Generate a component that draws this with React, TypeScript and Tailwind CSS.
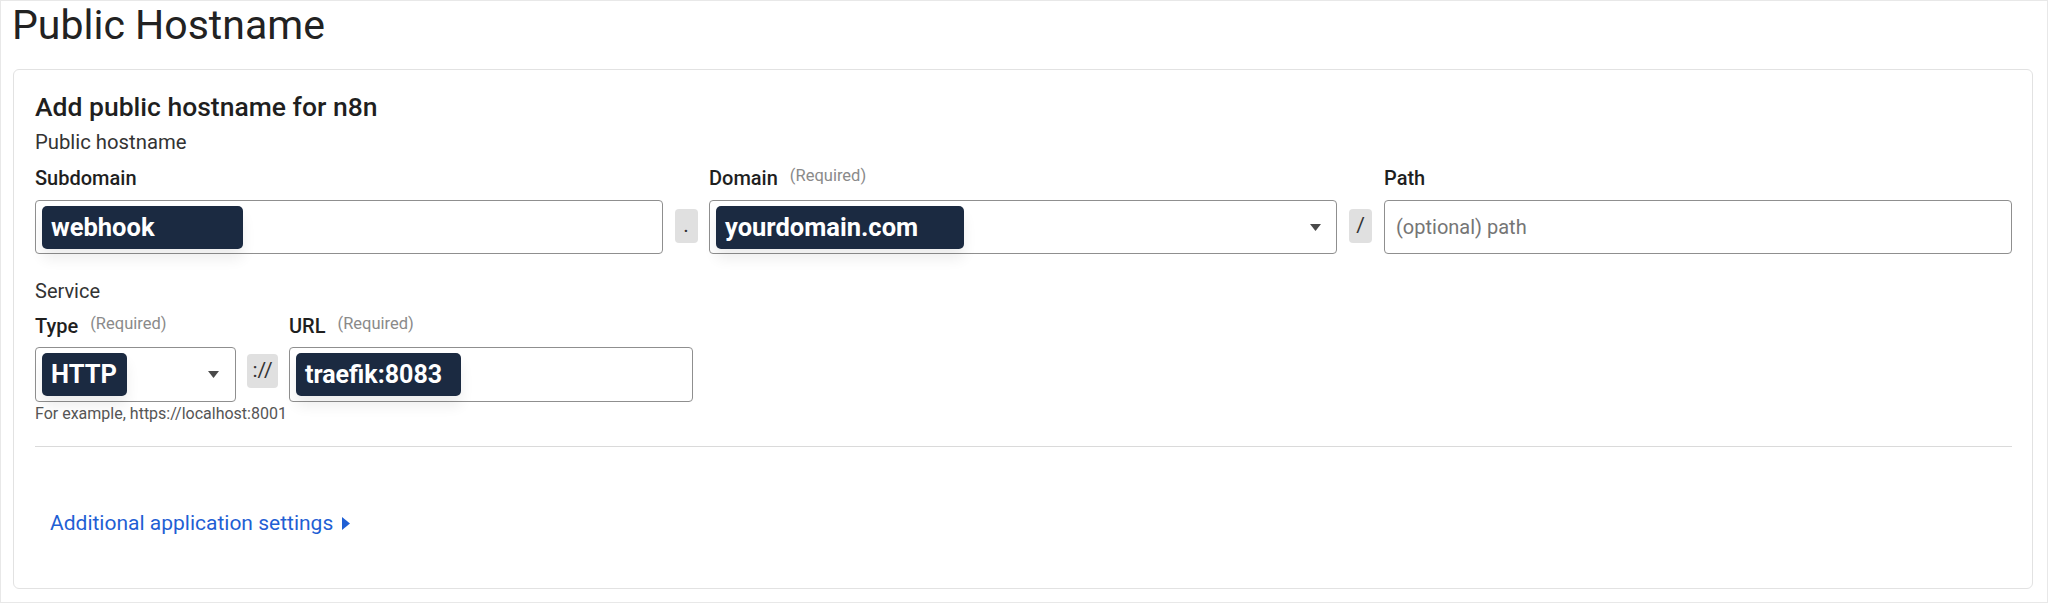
import React from "react";

function Caret() {
  return (
    <svg width="11" height="7" viewBox="0 0 11 7" className="shrink-0">
      <path d="M0 0 L11 0 L5.5 7 Z" fill="#4a4a4a" />
    </svg>
  );
}

function Redact({ children, w }: { children: React.ReactNode; w: string }) {
  return (
    <div
      className={`${w} h-[43px] bg-[#1b2a41] rounded-[5px] flex items-center px-[9px] text-white text-[25.5px] font-bold shadow-[0_10px_14px_rgba(0,0,0,0.07)]`}
    >
      {children}
    </div>
  );
}

function Chip({ children, w }: { children: React.ReactNode; w: string }) {
  return (
    <div
      className={`${w} h-[34px] shrink-0 bg-[#e0e0e0] rounded-[4px] flex items-center justify-center text-[21px] text-[#333]`}
    >
      {children}
    </div>
  );
}

function Label({ text, required }: { text: string; required?: boolean }) {
  return (
    <div className="flex items-center h-[24px]">
      <span className="text-[20px] font-medium text-[#1f1f1f] leading-[24px]">{text}</span>
      {required && (
        <span className="ml-[12px] text-[16.5px] text-[#8a8a8a] leading-[20px] -mt-[4px]">(Required)</span>
      )}
    </div>
  );
}

export default function App() {
  return (
    <div className="w-[2048px] h-[603px] bg-white border border-[#e8e8e8] font-['Roboto',sans-serif] text-[#222] overflow-hidden">
      <h1 className="text-[41px] leading-[48px] pl-[11px] text-[#222]">Public Hostname</h1>
      <div className="mt-[20px] ml-[12px] mr-[14px] border border-[#e2e2e2] rounded-[6px] pl-[21px] pr-[20px] pt-[22px] pb-[52px]">
        <div className="text-[26.5px] font-medium leading-[30px] text-[#1f1f1f]">Add public hostname for n8n</div>
        <div className="mt-[8px] text-[20.3px] leading-[24px] text-[#333]">Public hostname</div>

        <div className="mt-[12px] flex items-start">
          <div className="flex-1 flex flex-col">
            <Label text="Subdomain" />
            <div className="mt-[10px] h-[54px] border border-[#8f8f8f] rounded-[4px] flex items-center px-[6px]">
              <Redact w="w-[201px]">webhook</Redact>
            </div>
          </div>
          <div className="w-[46px] shrink-0 flex justify-center pt-[43px]">
            <Chip w="w-[23px]">.</Chip>
          </div>
          <div className="flex-1 flex flex-col">
            <Label text="Domain" required />
            <div className="mt-[10px] h-[54px] border border-[#8f8f8f] rounded-[4px] flex items-center justify-between pl-[6px] pr-[15px]">
              <Redact w="w-[248px]">yourdomain.com</Redact>
              <Caret />
            </div>
          </div>
          <div className="w-[47px] shrink-0 flex justify-center pt-[43px]">
            <Chip w="w-[23px]">/</Chip>
          </div>
          <div className="flex-1 flex flex-col">
            <Label text="Path" />
            <div className="mt-[10px] h-[54px] border border-[#8f8f8f] rounded-[4px] flex items-center px-[11px] text-[20px] text-[#757575]">
              (optional) path
            </div>
          </div>
        </div>

        <div className="mt-[25px] text-[20px] leading-[24px] text-[#333]">Service</div>

        <div className="mt-[11px] flex items-start">
          <div className="w-[201px] flex flex-col">
            <Label text="Type" required />
            <div className="mt-[9px] h-[55px] border border-[#8f8f8f] rounded-[4px] flex items-center justify-between pl-[6px] pr-[16px]">
              <Redact w="w-[85px]">HTTP</Redact>
              <Caret />
            </div>
            <div className="mt-[2px] text-[16px] leading-[20px] text-[#555] whitespace-nowrap">
              For example, https://localhost:8001
            </div>
          </div>
          <div className="w-[53px] shrink-0 flex justify-center pt-[40px]">
            <Chip w="w-[31px]">://</Chip>
          </div>
          <div className="w-[404px] flex flex-col">
            <Label text="URL" required />
            <div className="mt-[9px] h-[55px] border border-[#8f8f8f] rounded-[4px] flex items-center px-[6px]">
              <Redact w="w-[165px]">
                <span className="text-[25px]">traefik:8083</span>
              </Redact>
            </div>
          </div>
        </div>

        <div className="mt-[22px] h-px bg-[#dadada]" />

        <div className="mt-[63px] pl-[15px] flex items-center gap-[9px] text-[21px] leading-[26px] text-[#1f5fd4]">
          <span>Additional application settings</span>
          <svg width="8" height="13" viewBox="0 0 8 13">
            <path d="M0 0 L8 6.5 L0 13 Z" fill="#1f5fd4" />
          </svg>
        </div>
      </div>
    </div>
  );
}
